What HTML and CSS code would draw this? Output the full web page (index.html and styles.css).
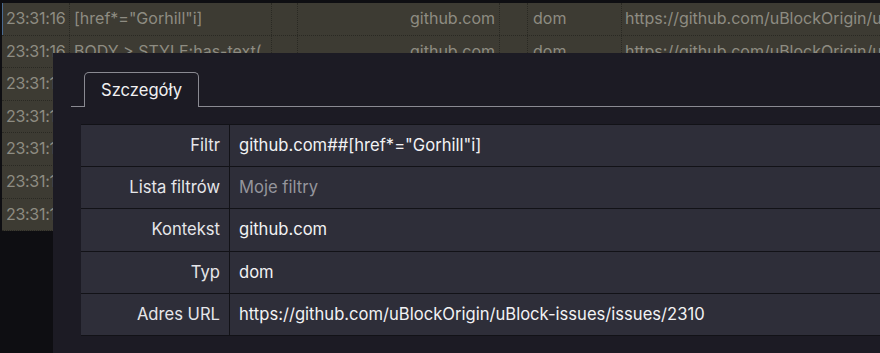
FILE: index.html
```html
<!DOCTYPE html>
<html lang="pl">
<head>
<meta charset="utf-8">
<title>Logger</title>
<link rel="stylesheet" href="styles.css">
</head>
<body>
<div class="page">
  <div class="log">
    <div class="row first"><span class="c time">23:31:16</span><span class="c filter">[href*="Gorhill"i]</span><span class="c gap"></span><span class="c ctx">github.com</span><span class="c gap2"></span><span class="c type">dom</span><span class="c url">https://github.com/uBlockOrigin/uBlock-issues/issues/2310</span></div>
    <div class="row"><span class="c time">23:31:16</span><span class="c filter">BODY &gt; STYLE:has-text(</span><span class="c gap"></span><span class="c ctx">github.com</span><span class="c gap2"></span><span class="c type">dom</span><span class="c url">https://github.com/uBlockOrigin/uBlock-issues/issues/2310</span></div>
    <div class="row"><span class="c time">23:31:16</span><span class="c filter"></span></div>
    <div class="row"><span class="c time">23:31:16</span><span class="c filter"></span></div>
    <div class="row"><span class="c time">23:31:16</span><span class="c filter"></span></div>
    <div class="row"><span class="c time">23:31:16</span><span class="c filter"></span></div>
    <div class="row"><span class="c time">23:31:16</span><span class="c filter"></span></div>
  </div>

  <div class="modal">
    <div class="tabs">
      <div class="tab">Szczegóły</div>
    </div>
    <div class="details">
      <div class="drow"><div class="lbl">Filtr</div><div class="val">github.com##[href*="Gorhill"i]</div></div>
      <div class="drow"><div class="lbl">Lista filtrów</div><div class="val dim">Moje filtry</div></div>
      <div class="drow"><div class="lbl">Kontekst</div><div class="val">github.com</div></div>
      <div class="drow"><div class="lbl">Typ</div><div class="val">dom</div></div>
      <div class="drow"><div class="lbl">Adres URL</div><div class="val">https://github.com/uBlockOrigin/uBlock-issues/issues/2310</div></div>
    </div>
  </div>
</div>
</body>
</html>
```

FILE: styles.css
```css
* { box-sizing: border-box; }
html, body {
  margin: 0;
  padding: 0;
  width: 880px;
  height: 353px;
  overflow: hidden;
  background: #0e0e12;
  font-family: Inter, "Noto Sans", sans-serif;
}
.page {
  position: relative;
  width: 880px;
  height: 353px;
  padding-top: 3px;
  background: #0e0e12;
}
.log {
  margin-left: 2px;
}
.row {
  display: flex;
  height: 32.6px;
  background: #3d3b33;
  border-bottom: 1px dotted #2a2923;
  color: #8e8c82;
  font-size: 16px;
  line-height: 31px;
  white-space: nowrap;
  overflow: hidden;
}
.row.first { box-shadow: inset 2px 0 0 -1px #4a6a90; }
.c {
  display: block;
  flex: none;
  overflow: hidden;
  border-right: 1px dotted #2a2923;
  height: 100%;
}
.time { width: 68px; padding-left: 4px; letter-spacing: -0.3px; }
.filter { width: 202px; padding-left: 4px; }
.gap { width: 26px; }
.ctx { width: 202px; text-align: right; padding-right: 4px; }
.gap2 { width: 28px; }
.type { width: 94px; padding-left: 5px; }
.url { flex: 1; padding-left: 3px; border-right: 0; }

.modal {
  position: absolute;
  left: 53px;
  top: 53px;
  right: 0;
  bottom: 0;
  background: #1c1b24;
  padding: 19px 0 0 18px;
}
.tabs {
  display: flex;
  border-bottom: 1px solid #8a8a92;
  padding-left: 13px;
}
.tab {
  width: 115px;
  height: 35px;
  border: 1px solid #8a8a92;
  border-bottom: 0;
  border-radius: 5px 5px 0 0;
  margin-bottom: -1px;
  background: #1c1b24;
  color: #f0f0f2;
  font-size: 16.6px;
  line-height: 34px;
  padding-left: 16px;
}
.details {
  margin: 17px 0 0 10px;
  border-top: 1px solid #121217;
}
.drow {
  display: flex;
  height: 42.2px;
  background: #2e2e39;
  border-bottom: 1px solid #121217;
  font-size: 16.6px;
  line-height: 41px;
}
.lbl {
  width: 149px;
  text-align: right;
  padding-right: 9px;
  color: #e6e6ea;
  border-right: 1px solid #121217;
  flex: none;
}
.val {
  flex: 1;
  padding-left: 9px;
  color: #f2f2f4;
  white-space: nowrap;
}
.val.dim { color: #95959c; }
```
